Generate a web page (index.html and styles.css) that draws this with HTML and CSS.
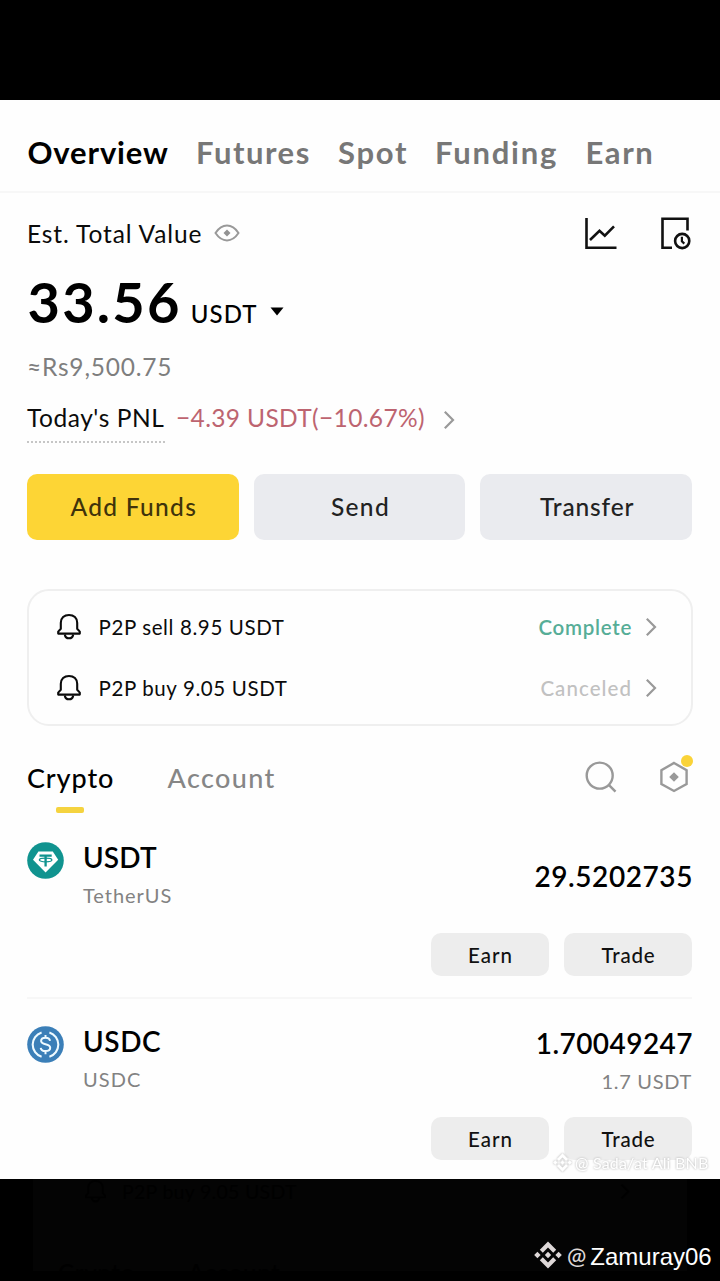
FILE: index.html
```
<!DOCTYPE html>
<html lang="en">
<head>
<meta charset="utf-8">
<title>Wallet overview</title>
<link rel="stylesheet" href="styles.css">
</head>
<body>
<svg class="defs" width="0" height="0">
  <symbol id="bell" viewBox="0 0 26 28"><path d="M2.2 20.6H23.8V18.6L21.2 15.8V9.8C21.2 5 17.8 2 13 2S4.8 5 4.8 9.8V15.8L2.2 18.6Z" fill="none" stroke="currentColor" stroke-width="2.1" stroke-linejoin="round"/><path d="M8.8 21.5C9.2 24.2 10.8 25.3 13 25.3S16.8 24.2 17.2 21.5" fill="none" stroke="currentColor" stroke-width="2.1"/></symbol>
  <symbol id="chevron" viewBox="0 0 12 20"><path d="M1.8 1.8L10 10L1.8 18.2" fill="none" stroke="currentColor" stroke-width="2.2"/></symbol>
  <symbol id="brand" viewBox="0 0 28 28"><g fill="currentColor"><path d="M14 .5L22.2 8.7L19.2 11.7L14 6.5L8.8 11.7L5.8 8.7Z"/><path d="M14 27.5L22.2 19.3L19.2 16.3L14 21.5L8.8 16.3L5.8 19.3Z"/><path d="M14 10.8L17.2 14L14 17.2L10.8 14Z"/><path d="M3.4 10.8L6.6 14L3.4 17.2L.2 14Z"/><path d="M24.6 10.8L27.8 14L24.6 17.2L21.4 14Z"/></g></symbol>
</svg>
<main class="screen">
  <nav class="tabs">
    <span class="tab tab-overview">Overview</span>
    <span class="tab tab-futures">Futures</span>
    <span class="tab tab-spot">Spot</span>
    <span class="tab tab-funding">Funding</span>
    <span class="tab tab-earn">Earn</span>
  </nav>

  <section class="summary">
    <div class="est">
      <span class="est-label">Est. Total Value</span>
      <svg class="eye" width="26" height="18" viewBox="0 0 26 18"><path d="M1.5 9C4.5 4.5 8.5 1.6 13 1.6S21.5 4.5 24.5 9C21.5 13.5 17.5 16.4 13 16.4S4.5 13.5 1.5 9Z" fill="none" stroke="#999" stroke-width="2"/><path d="M13 5.5L16.5 9L13 12.5L9.5 9Z" fill="#929292"/></svg>
      <svg class="chart" width="34" height="34" viewBox="0 0 34 34"><path d="M2.5 1V30.8H32.5M6 23L15.5 13.7L20.8 18.7L30 9.3" fill="none" stroke="#111" stroke-width="2.6"/></svg>
      <svg class="history" width="32" height="34" viewBox="0 0 32 34"><path d="M12 30.8H2.5V1.8H27.5V13.5" fill="none" stroke="#111" stroke-width="2.6"/><circle cx="22.2" cy="24" r="7.1" fill="none" stroke="#111" stroke-width="2.6"/><path d="M21.9 19.8V24.3L24.3 26.6" fill="none" stroke="#111" stroke-width="2.2"/></svg>
    </div>
    <div class="balance">
      <strong class="amount">33.56</strong>
      <span class="unit">USDT</span>
      <svg class="caret" width="14" height="9" viewBox="0 0 14 9"><path d="M.5 .5H13.5L7 8.5Z"/></svg>
    </div>
    <div class="fiat">≈Rs9,500.75</div>
    <div class="pnl">
      <span class="pnl-label">Today's PNL</span>
      <span class="pnl-value">−4.39 USDT(−10.67%)</span>
      <svg class="chev pnl-chev" width="12" height="20"><use href="#chevron"/></svg>
    </div>
    <div class="actions">
      <button class="action primary">Add Funds</button>
      <button class="action">Send</button>
      <button class="action">Transfer</button>
    </div>
  </section>

  <section class="orders">
    <div class="order">
      <svg width="26" height="28"><use href="#bell"/></svg>
      <span class="order-text">P2P sell 8.95 USDT</span>
      <span class="status complete">Complete</span>
      <svg class="chev" width="12" height="20"><use href="#chevron"/></svg>
    </div>
    <div class="order">
      <svg width="26" height="28"><use href="#bell"/></svg>
      <span class="order-text">P2P buy 9.05 USDT</span>
      <span class="status canceled">Canceled</span>
      <svg class="chev" width="12" height="20"><use href="#chevron"/></svg>
    </div>
  </section>

  <nav class="switch">
    <span class="switch-crypto">Crypto</span>
    <span class="switch-account">Account</span>
    <svg class="search" width="34" height="34" viewBox="0 0 34 34"><circle cx="15.7" cy="15.6" r="13" fill="none" stroke="#999" stroke-width="2.4"/><path d="M25 25.2L31.5 31.7" stroke="#999" stroke-width="2.5"/></svg>
    <span class="filter">
      <svg width="30" height="34" viewBox="0 0 30 34"><path d="M15 3L27.6 10.2V24L15 31L2.4 24V10.2Z" fill="none" stroke="#999" stroke-width="2.4"/><path d="M15 12.3L19.8 17L15 21.7L10.2 17Z" fill="#999"/></svg>
      <i class="dot"></i>
    </span>
  </nav>

  <section class="asset">
    <div class="asset-main">
      <svg class="coin" width="37" height="37" viewBox="0 0 37 37"><circle cx="18.5" cy="18.5" r="18.3" fill="#10938f"/><path d="M11.4 9.4H25.8L31.2 17.7L18.6 30.6L6 17.7Z" fill="#fff"/><path d="M12.5 13.6H24.7M18.6 13.6V24.5" fill="none" stroke="#10938f" stroke-width="2.3"/><ellipse cx="18.6" cy="18" rx="6.3" ry="1.8" fill="none" stroke="#10938f" stroke-width="1.2"/></svg>
      <div class="names"><b class="usdt">USDT</b><span class="tether">TetherUS</span></div>
      <div class="values single"><b class="v1">29.5202735</b></div>
    </div>
    <div class="asset-actions"><button class="small earn">Earn</button><button class="small trade">Trade</button></div>
  </section>
  <section class="asset second">
    <div class="asset-main">
      <svg class="coin" width="37" height="37" viewBox="0 0 37 37"><circle cx="18.5" cy="18.5" r="18.3" fill="#3b7fb8"/><path d="M14.6 6.4A12.8 12.8 0 0 0 14.6 30.8M22.4 6.4A12.8 12.8 0 0 1 22.4 30.8" fill="none" stroke="#eefaff" stroke-width="2.1"/><path d="M23 14.8C22.7 12.7 21 11.8 18.5 11.8C15.9 11.8 14.1 13 14.1 15.1C14.1 19.4 23.2 17 23.2 21.7C23.2 23.9 21.3 25.1 18.5 25.1C15.7 25.1 14 24 13.7 21.8M18.5 9V12M18.5 25V28.2" fill="none" stroke="#eefaff" stroke-width="2"/></svg>
      <div class="names"><b class="usdc">USDC</b><span class="usdc-sub">USDC</span></div>
      <div class="values"><b class="v2">1.70049247</b><span class="v2-sub">1.7 USDT</span></div>
    </div>
    <div class="asset-actions"><button class="small earn">Earn</button><button class="small trade">Trade</button></div>
  </section>
  <div class="watermark"><svg width="19" height="19"><use href="#brand"/></svg><span>@ Sada/at Ali BNB</span></div>
</main>
<footer class="footer">
  <div class="ghost">
    <div class="ghost-row"><svg width="23" height="25"><use href="#bell"/></svg><span class="ghost-order">P2P buy 9.05 USDT</span><svg class="ghost-chev" width="10" height="17"><use href="#chevron"/></svg></div>
    <div class="ghost-tabs"><span>Crypto</span><span>Account</span></div>
  </div>
  <div class="credit"><svg width="28" height="28"><use href="#brand"/></svg><span class="at">@</span><span class="handle">Zamuray06</span></div>
</footer>
</body>
</html>
```
FILE: styles.css
```
* { box-sizing: border-box; }
body { margin: 0; width: 720px; height: 1281px; padding-top: 100px; background: #000; font-family: Lato, "Noto Sans", sans-serif; color: #0b0b0b; overflow: hidden; }
span, b, strong, button { white-space: nowrap; }
svg { display: block; flex: none; }
button { border: 0; padding: 0; font-family: inherit; color: inherit; }
.defs { position: absolute; }
.screen { position: relative; height: 1079px; background: #fefefe; overflow: hidden; }

.tabs { display: flex; align-items: center; height: 93px; padding: 13px 0 0 27.5px; border-bottom: 2px solid #f7f7f7; font-size: 31px; font-weight: 700; color: #777; }
.tab { flex: none; }
.tab-overview { width: 168.5px; letter-spacing: .85px; color: #000; }
.tab-futures { width: 142px; letter-spacing: 1.5px; }
.tab-spot { width: 97px; letter-spacing: 1.7px; }
.tab-funding { width: 150.5px; letter-spacing: 1.75px; }
.tab-earn { letter-spacing: 1.6px; }

.summary { padding: 0 28px 0 27px; }
.est { display: flex; align-items: center; height: 35px; margin-top: 23px; font-size: 24.5px; }
.est-label { letter-spacing: .88px; }
.eye { margin: -2px 0 0 12px; }
.chart { margin-left: auto; }
.history { margin: 0 0 0 42px; }
.balance { display: flex; align-items: baseline; height: 60px; margin-top: 20px; line-height: 61px; color: #000; }
.amount { font-size: 56px; font-weight: 700; letter-spacing: 2.2px; margin-left: .5px; }
.unit { font-size: 24px; font-weight: 500; letter-spacing: 1.08px; margin-left: 9px; }
.caret { position: relative; top: -7px; margin-left: 12px; align-self: baseline; }
.fiat { margin-top: 20px; height: 31px; font-size: 24.5px; line-height: 31px; letter-spacing: .8px; color: #7e7e7e; }
.pnl { display: flex; align-items: flex-start; height: 48px; margin-top: 13px; font-size: 24.5px; line-height: 45px; }
.pnl-label { width: 138px; height: 48px; border-bottom: 2px dotted #c6c6c6; letter-spacing: .55px; }
.pnl-value { margin-left: 11px; color: #bd6470; letter-spacing: .36px; }
.chev { color: #999; }
.pnl-chev { margin: 15px 0 0 18px; }
.actions { display: grid; grid-template-columns: repeat(3, 1fr); gap: 15px; margin-top: 30.5px; }
.action { height: 66px; padding: 0 0 1px 2px; border-radius: 10px; background: #eaebef; color: #222; font-size: 24.5px; font-weight: 500; letter-spacing: 1.3px; }
.action:last-child { letter-spacing: .85px; }
.primary { background: #fdd535; color: #40330b; }

.orders { height: 137px; margin: 49px 27px 0; padding: 6px 34px 0 27px; border: 2px solid #efefef; border-radius: 22px; }
.order { display: flex; align-items: center; height: 61px; font-size: 20.5px; }
.order-text { margin-left: 16.5px; letter-spacing: .62px; }
.status { margin-left: auto; margin-right: 13px; }
.complete { color: #56ad97; font-weight: 600; letter-spacing: .73px; }
.canceled { color: #c1c1c1; font-weight: 500; letter-spacing: 1.06px; }

.switch { position: relative; display: flex; align-items: center; height: 34px; margin-top: 34px; padding: 0 31px 0 27px; font-size: 27px; font-weight: 500; }
.switch::after { content: ""; position: absolute; left: 56px; top: 47px; width: 28px; height: 6px; border-radius: 2px; background: #f5d33f; }
.switch-crypto { width: 140.5px; padding-top: 2px; letter-spacing: .89px; color: #000; }
.switch-account { padding-top: 2px; color: #868686; letter-spacing: 1.37px; }
.search { margin-left: auto; }
.filter { position: relative; margin-left: 41px; }
.dot { position: absolute; left: 22px; top: -5px; width: 12px; height: 12px; border-radius: 50%; background: #fad338; }

.asset { height: 158px; margin: 45px 28px 0 27px; padding-top: 3px; }
.second { margin-top: 0; border-top: 2px solid #f7f7f7; padding-top: 27px; }
.asset-main { display: flex; height: 91px; }
.names, .values { display: flex; flex-direction: column; margin-top: -2px; }
.names { margin-left: 19px; }
.names b, .values b { font-size: 28px; font-weight: 500; line-height: 34px; color: #000; }
.names span, .values span { font-size: 20px; line-height: 24px; margin-top: 9px; color: #828282; }
.values { margin-left: auto; align-items: flex-end; }
.values.single { margin-top: 17px; }
.second .values { margin-top: 0; }
.names .usdt { font-weight: 600; letter-spacing: .15px; }
.tether { letter-spacing: .97px; }
.names .usdc { font-weight: 600; letter-spacing: .6px; }
.usdc-sub { letter-spacing: 1.08px; }
.values .v1 { font-weight: 600; letter-spacing: .58px; margin-right: -1px; }
.values .v2 { font-weight: 600; letter-spacing: .45px; margin-right: -1px; }
.values .v2-sub { margin-top: 9px; letter-spacing: .69px; }
.asset-actions { display: flex; justify-content: flex-end; gap: 15px; }
.small { height: 43px; padding: 1px 0 0 1px; border-radius: 10px; background: #ededed; color: #111; font-size: 20.5px; font-weight: 500; }
.earn { width: 118px; letter-spacing: 1px; }
.trade { width: 128px; letter-spacing: .8px; }
.watermark { position: absolute; left: 553px; top: 1053px; display: flex; align-items: center; gap: 3px; color: #fff; font-size: 16px; line-height: 18px; letter-spacing: .2px; filter: drop-shadow(0 0 1px #aaa); }

.footer { position: relative; height: 102px; }
.ghost { height: 92px; margin: 0 33px; background: #040404; color: #000; overflow: hidden; }
.ghost-row { display: flex; align-items: center; height: 24px; padding: 0 57px 0 51px; font-size: 19.5px; letter-spacing: .3px; }
.ghost-order { margin-left: 15px; }
.ghost-chev { margin-left: auto; }
.ghost-tabs { display: flex; gap: 53px; margin: 55px 0 0 25px; font-size: 24px; font-weight: 500; letter-spacing: .7px; }
.credit { position: absolute; left: 534px; top: 62px; display: flex; align-items: center; height: 28px; color: #ded8d8; }
.at { margin-left: 5px; font-size: 23px; font-weight: 500; }
.handle { margin-left: 4px; padding-top: 3px; font: 24px "Liberation Sans", Arial, sans-serif; color: #fff; }
```
